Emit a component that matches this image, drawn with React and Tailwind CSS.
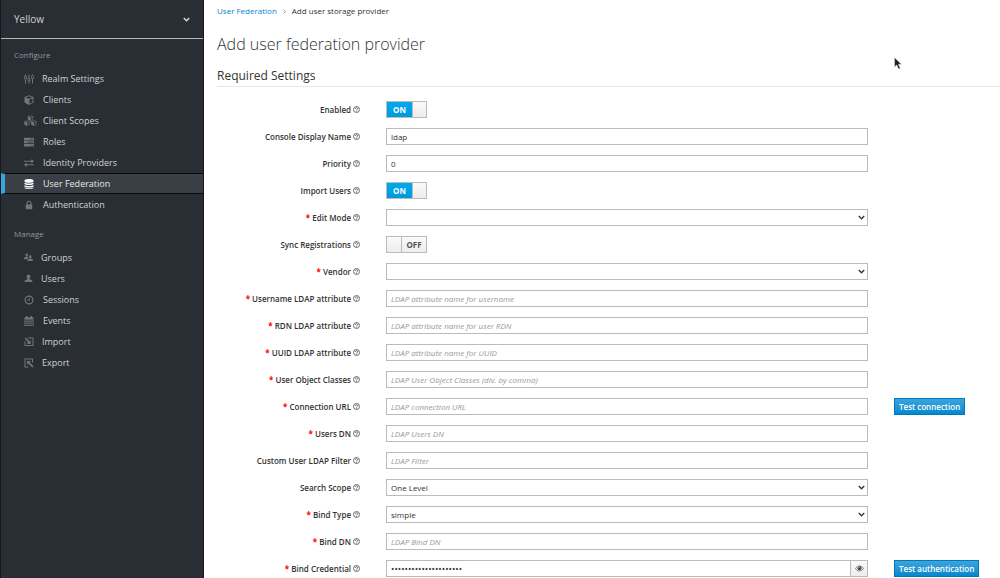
import React from "react";

const svgProps = { width: 10, height: 10, viewBox: "0 0 20 20", fill: "currentColor", "aria-hidden": true };

const Sliders = () => (
  <svg {...svgProps}>
    <path d="M2 1h2v3H2zM2 11h2v8H2zM9 1h2v6H9zM9 14h2v5H9zM16 1h2v2h-2zM16 10h2v9h-2z" />
    <path fillRule="evenodd" d="M.5 4h5v6.500h-5zM2 5.500V9h2V5.500zM7.500 7.500h5V14h-5zM9 9v3.500h2V9zM14.500 3h5v6.500h-5zM16 4.500V8h2V4.500z" />
  </svg>
);
const cubePath = "M10 0.5 19 4v11l-9 5-9-5V4zM10 2.4 3.6 5 10 7.4 16.4 5zM11 17.4l6-3.4V6.8l-6 2.3z";
const Cube = () => (
  <svg {...svgProps}>
    <path fillRule="evenodd" d={cubePath} />
  </svg>
);
const Cubes = () => (
  <svg {...svgProps} width={13} height={11} viewBox="0 0 26 22">
    <g fillRule="evenodd">
      <path transform="translate(7 0) scale(.6)" d={cubePath} />
      <path transform="translate(0 10) scale(.6)" d={cubePath} />
      <path transform="translate(13.5 10) scale(.6)" d={cubePath} />
    </g>
  </svg>
);
const Tasks = () => (
  <svg {...svgProps}>
    <path fillRule="evenodd" d="M0 1.500h20v5H0zM12 3.300v1.400h6.600V3.300zM0 7.700h20v5H0zM7 9.500v1.400h11.600V9.500zM0 14h20v5H0zM14 15.800v1.400h4.600v-1.400z" />
  </svg>
);
const Exchange = () => (
  <svg {...svgProps}>
    <path d="M0 5.600h14.500V2.400L20 6.600l-5.500 4.200V7.600H0zM20 14.600H5.500v3.200L0 13.600l5.500-4.200v3.200H20z" />
  </svg>
);
const Database = () => (
  <svg {...svgProps} viewBox="0 0 18 20">
    <path d="M0 3c0-4 18-4 18 0v1.500c0 4-18 4-18 0zM0 7c3 2.800 15 2.800 18 0v2.500c0 3.600-18 3.600-18 0zM0 12c3 2.800 15 2.800 18 0v2.300c0 3.600-18 3.600-18 0zM0 16.500c3 2.800 15 2.800 18 0v1c0 3.600-18 3.600-18 0z" />
  </svg>
);
const Lock = () => (
  <svg {...svgProps}>
    <path fillRule="evenodd" d="M5 9V6.500a5 5 0 0 1 10 0V9h1.500v9.500h-13V9zM7.200 9h5.600V6.500a2.800 2.800 0 0 0-5.600 0z" />
  </svg>
);
const User = () => (
  <svg {...svgProps} width={9} height={9}>
    <path d="M10 1c2.700 0 4.200 2 4.200 4.500 0 2-.9 4-2.200 4.900v1.400l5 1.800c1 .5 1.500 1.400 1.500 2.700V18h-17v-1.700c0-1.300.5-2.200 1.500-2.700l5-1.800v-1.400C6.700 9.500 5.800 7.500 5.800 5.500 5.800 3 7.300 1 10 1z" />
  </svg>
);
const Users = () => (
  <svg {...svgProps} width={9} height={9}>
    <path d="M6 1c1.700 0 2.700 1.200 2.700 2.800S7.600 6.900 7 7.300v.8c1.500.6 2.700 1 3 1.800-1.500 1.300-1.400 2.700-.8 4.100H0v-3c0-1.500 3-2 5-2.900v-.8c-.8-.4-1.700-1.900-1.700-3.500S4.300 1 6 1z" />
    <path d="M14 5c1.800 0 2.900 1.300 2.900 3s-1 3-1.800 3.500v1c2 .8 4.900 1.400 4.900 3.400V18H8v-2.100c0-2 2.900-2.600 4.900-3.400v-1c-.8-.5-1.800-1.800-1.800-3.500s1.100-3 2.900-3z" />
  </svg>
);
const Clock = () => (
  <svg {...svgProps}>
    <path fillRule="evenodd" d="M10 1a9 9 0 1 1 0 18 9 9 0 0 1 0-18zm0 2.400a6.600 6.600 0 1 0 0 13.200 6.600 6.600 0 0 0 0-13.200z" />
    <path d="M9.500 5.500h1.800V11.300H6.500V9.600h3z" />
  </svg>
);
const Calendar = () => (
  <svg {...svgProps}>
    <path
      fillRule="evenodd"
      d="M4 0h3v2.500h6V0h3v2.500h3V20H1V2.500h3zM2.500 7v2.700h3V7zm4 0v2.700h3V7zm4 0v2.700h3V7zm4 0v2.700h3V7zM2.500 11v2.700h3V11zm4 0v2.700h3V11zm4 0v2.700h3V11zm4 0v2.700h3V11zM2.500 15v3.300h3V15zm4 0v3.300h3V15zm4 0v3.300h3V15zm4 0v3.300h3V15z"
    />
  </svg>
);
const Import = () => (
  <svg {...svgProps}>
    <path d="M8 1h11v17H1V9h2v7h14V3H8z" />
    <path d="M1.200 3 3 1.200l7.800 7.300 2.500-2.500v8H5.500L8.300 11z" />
  </svg>
);
const Export = () => (
  <svg {...svgProps}>
    <path d="M1 1h17v8h-2V3H3v14h6v2H1z" />
    <path d="M6 6h7.500l-2.500 2.500 8.200 8-2.500 2.500-8.200-8L6 13.500z" />
  </svg>
);
const Help = () => (
  <svg width="7" height="7" viewBox="0 0 14 14" fill="none" stroke="#6b6b6b" strokeWidth="2" aria-hidden="true">
    <circle cx="7" cy="7" r="6" />
    <path d="M4.500 5.600C4.700 3 9.500 3 9.500 5.600 9.500 7.200 7 6.900 7 8.600M7 9.400v1.800" />
  </svg>
);
const Eye = () => (
  <svg width="9" height="7" viewBox="0 0 18 14" aria-hidden="true">
    <path d="M1 7c4-6.500 12-6.500 16 0-4 6.500-12 6.500-16 0z" fill="none" stroke="#555" strokeWidth="1.500" />
    <circle cx="9" cy="6.500" r="4" fill="#444" />
    <path d="M6.800 6.300A2.300 2.300 0 0 1 9 4.200" fill="none" stroke="#fff" />
  </svg>
);
const Chevron = ({ className }) => (
  <svg className={className} width="7" height="5" viewBox="0 0 14 10" fill="none" stroke="currentColor" strokeWidth="2.600" aria-hidden="true">
    <path d="M1.500 2 7 7.500 12.500 2" />
  </svg>
);

const configure = [
  { label: "Realm Settings", Icon: Sliders, box: "w-[18px]" },
  { label: "Clients", Icon: Cube, box: "w-[19px]" },
  { label: "Client Scopes", Icon: Cubes, box: "w-[19px]" },
  { label: "Roles", Icon: Tasks, box: "w-[19px]" },
  { label: "Identity Providers", Icon: Exchange, box: "w-[19px]" },
  { label: "User Federation", Icon: Database, box: "w-[19px]", active: true },
  { label: "Authentication", Icon: Lock, box: "w-[19px]" },
];
const manage = [
  { label: "Groups", Icon: Users, box: "w-[17px]" },
  { label: "Users", Icon: User, box: "w-[17px]" },
  { label: "Sessions", Icon: Clock, box: "w-[19px]" },
  { label: "Events", Icon: Calendar, box: "w-[19px]" },
  { label: "Import", Icon: Import, box: "w-[18px]" },
  { label: "Export", Icon: Export, box: "w-[18px]" },
];

function NavGroup({ title, items }) {
  return (
    <section>
      <h2 className="h-[18px] pl-[13px] text-[8px] leading-[18px] text-[#91969c]">{title}</h2>
      <ul className="pt-[4px]">
        {items.map(({ label, Icon, box, active }) => (
          <li key={label}>
            <a
              href="#"
              aria-current={active ? "page" : undefined}
              className={
                active
                  ? "flex h-[21px] items-center border-y border-l-4 border-y-[#080a0c] border-l-[#39a5dc] bg-[#393f44] pl-[19px] text-[9px] text-[#e8e8e8]"
                  : "flex h-[21px] items-center pl-[23px] text-[9px] text-[#d1d1d1]"
              }
            >
              <span className={`${box} ${active ? "text-white" : "text-[#72767b]"} shrink-0`}>
                <Icon />
              </span>
              {label}
            </a>
          </li>
        ))}
      </ul>
    </section>
  );
}

const fieldClass =
  "block h-[17px] w-full min-w-0 appearance-none border border-[#bbb] bg-white px-[4px] leading-[15px] text-[#333] outline-none placeholder:italic placeholder:text-[#999] placeholder:opacity-100";

function Toggle({ id, on }) {
  return (
    <span className="relative flex h-[17px] w-[41px] border border-[#bbb] text-[8px] leading-[15px] font-bold">
      <input id={id} type="checkbox" defaultChecked={on} className="peer absolute inset-0 z-10 h-full w-full cursor-pointer opacity-0" />
      {on ? (
        <>
          <span className="flex-1 bg-linear-to-b from-[#00a9ec] to-[#009bd9] text-center text-white">ON</span>
          <span className="w-[14px] border-l border-[#bbb] bg-linear-to-b from-[#fafafa] to-[#ededed]" />
        </>
      ) : (
        <>
          <span className="w-[15px] border-r border-[#bbb] bg-linear-to-b from-[#fafafa] to-[#ededed]" />
          <span className="flex-1 bg-linear-to-b from-[#fafafa] to-[#ededed] text-center text-[#4d5258]">OFF</span>
        </>
      )}
    </span>
  );
}

function Control({ id, type, value, placeholder }) {
  if (type === "toggle") return <Toggle id={id} on={value} />;
  if (type === "select")
    return (
      <div className="relative">
        <select id={id} className={`${fieldClass} text-[8px]`}>
          <option>{value}</option>
        </select>
        <Chevron className="pointer-events-none absolute top-[6px] right-[3px] text-[#333]" />
      </div>
    );
  if (type === "password")
    return (
      <div className="flex">
        <input id={id} type="password" defaultValue={value} className={`${fieldClass} flex-1 text-[9px]`} />
        <button type="button" aria-label="Show" className="flex h-[17px] w-[17px] shrink-0 items-center justify-center border border-l-0 border-[#bbb] bg-linear-to-b from-[#fafafa] to-[#ededed]">
          <Eye />
        </button>
      </div>
    );
  return <input id={id} type="text" defaultValue={value} placeholder={placeholder} className={`${fieldClass} text-[8px]`} />;
}

const fields = [
  { id: "enabled", label: "Enabled", type: "toggle", value: true },
  { id: "name", label: "Console Display Name", value: "ldap" },
  { id: "priority", label: "Priority", value: "0" },
  { id: "import", label: "Import Users", type: "toggle", value: true },
  { id: "edit", label: "Edit Mode", required: true, type: "select", value: "" },
  { id: "sync", label: "Sync Registrations", type: "toggle", value: false },
  { id: "vendor", label: "Vendor", required: true, type: "select", value: "" },
  { id: "username", label: "Username LDAP attribute", required: true, placeholder: "LDAP attribute name for username" },
  { id: "rdn", label: "RDN LDAP attribute", required: true, placeholder: "LDAP attribute name for user RDN" },
  { id: "uuid", label: "UUID LDAP attribute", required: true, placeholder: "LDAP attribute name for UUID" },
  { id: "classes", label: "User Object Classes", required: true, placeholder: "LDAP User Object Classes (div. by comma)" },
  { id: "url", label: "Connection URL", required: true, placeholder: "LDAP connection URL", action: "Test connection" },
  { id: "usersdn", label: "Users DN", required: true, placeholder: "LDAP Users DN" },
  { id: "filter", label: "Custom User LDAP Filter", placeholder: "LDAP Filter" },
  { id: "scope", label: "Search Scope", type: "select", value: "One Level" },
  { id: "bindtype", label: "Bind Type", required: true, type: "select", value: "simple" },
  { id: "binddn", label: "Bind DN", required: true, placeholder: "LDAP Bind DN" },
  { id: "credential", label: "Bind Credential", required: true, type: "password", value: "aaaaaaaaaaaaaaaaaaaaa", action: "Test authentication" },
];

export default function App() {
  return (
    <div className="flex min-h-screen bg-white font-['Open_Sans','Noto_Sans',sans-serif] text-[#333]">
      <aside className="w-[204px] shrink-0 border-x border-[#16191c] bg-[#292e34]">
        <button type="button" className="flex h-[39px] w-full items-center justify-between border-b border-[#b4b7ba] pr-[13px] pl-[13px] text-[10px] text-[#d1d1d1]">
          Yellow
          <Chevron className="text-[#e0e0e0]" />
        </button>
        <nav className="flex flex-col gap-[10px] pt-[7px]">
          <NavGroup title="Configure" items={configure} />
          <NavGroup title="Manage" items={manage} />
        </nav>
      </aside>

      <main className="min-w-0 flex-1 pl-[13px]">
        <nav aria-label="Breadcrumb" className="flex h-[22px] items-center gap-[6px] text-[8px]">
          <a href="#" className="text-[#0088ce]">User Federation</a>
          <svg width="3" height="5" viewBox="0 0 6 10" fill="none" stroke="#999" strokeWidth="1.800" aria-hidden="true">
            <path d="M1 1l4 4-4 4" />
          </svg>
          <span>Add user storage provider</span>
        </nav>
        <h1 className="pt-[10px] text-[16px] leading-[24px] font-light">Add user federation provider</h1>
        <form onSubmit={(e) => e.preventDefault()}>
          <h2 className="mt-[10px] border-b border-[#e6e6e6] text-[12px] leading-[20px]">Required Settings</h2>
          <div className="flex flex-col gap-[10px] pt-[14px]">
            {fields.map((f) => (
              <div key={f.id} className="grid h-[17px] grid-cols-[143fr_482fr_106fr] items-center gap-x-[26px]">
                <div className="flex items-center justify-end gap-[2px] text-[8px] leading-[17px] font-semibold whitespace-nowrap">
                  <label htmlFor={f.id}>
                    {f.required && <span className="font-bold text-[#f00]">* </span>}
                    {f.label}
                  </label>
                  <Help />
                </div>
                <Control {...f} />
                {f.action && (
                  <button type="button" className="h-[17px] justify-self-start border border-[#0079b8] bg-linear-to-b from-[#39a5dc] to-[#0088ce] px-[4px] text-[8px] leading-[15px] font-semibold whitespace-nowrap text-white">
                    {f.action}
                  </button>
                )}
              </div>
            ))}
          </div>
        </form>
      </main>

      <svg className="pointer-events-none absolute top-[57px] left-[894px]" width="8" height="13" viewBox="0 0 16 26" aria-hidden="true">
        <path d="M1 1v19l4.500-4 3.500 8 3.500-1.500-3.500-8H15z" fill="#222" stroke="#ddd" strokeWidth="1.200" />
      </svg>
    </div>
  );
}
